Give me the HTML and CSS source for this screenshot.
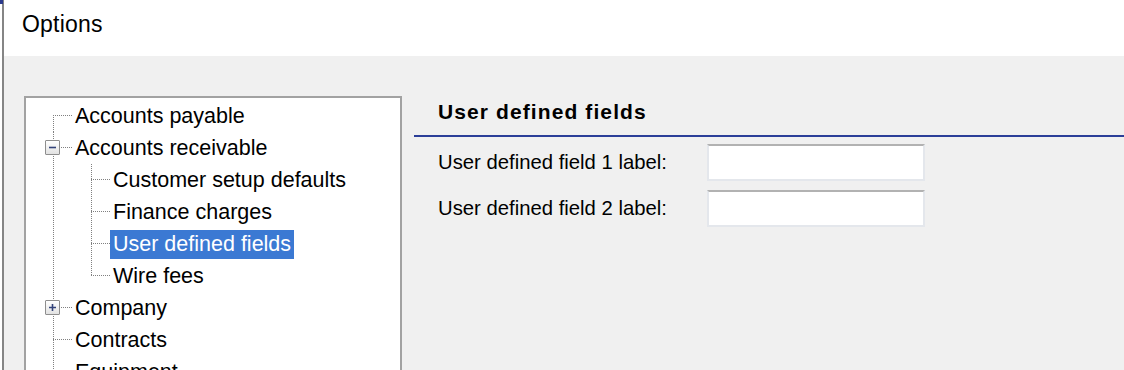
FILE: index.html
```html
<!DOCTYPE html>
<html>
<head>
<meta charset="utf-8">
<link rel="stylesheet" href="styles.css">
</head>
<body>
<div class="corner"></div>
<div class="window">
  <div class="titlebar">Options</div>
  <div class="content">
    <div class="tree">
      <div class="row"><span class="cell first"></span><span class="label">Accounts payable</span></div>
      <div class="row"><span class="cell tee"><span class="box"><svg width="15" height="15" viewBox="0 0 15 15"><path d="M4 7.5h7" stroke="#34447a" stroke-width="1.6"/></svg></span></span><span class="label">Accounts receivable</span></div>
      <div class="row"><span class="cell pipe"></span><span class="cell tee"></span><span class="label">Customer setup defaults</span></div>
      <div class="row"><span class="cell pipe"></span><span class="cell tee"></span><span class="label">Finance charges</span></div>
      <div class="row"><span class="cell pipe"></span><span class="cell tee"></span><span class="label selected">User defined fields</span></div>
      <div class="row"><span class="cell pipe"></span><span class="cell ell"></span><span class="label">Wire fees</span></div>
      <div class="row"><span class="cell tee"><span class="box"><svg width="15" height="15" viewBox="0 0 15 15"><path d="M4 7.5h7M7.5 4v7" stroke="#34447a" stroke-width="1.6"/></svg></span></span><span class="label">Company</span></div>
      <div class="row"><span class="cell tee"></span><span class="label">Contracts</span></div>
      <div class="row"><span class="cell tee"></span><span class="label">Equipment</span></div>
    </div>
    <div class="panel">
      <div class="heading">User defined fields</div>
      <div class="fields">
        <div class="field"><span class="flabel">User defined field 1 label:</span><span class="input"></span></div>
        <div class="field"><span class="flabel">User defined field 2 label:</span><span class="input"></span></div>
      </div>
    </div>
  </div>
</div>
</body>
</html>
```

FILE: styles.css
```css
html, body {
  margin: 0;
  padding: 0;
  height: 370px;
  overflow: hidden;
  background: #ffffff;
  font-family: "Liberation Sans", Arial, sans-serif;
  color: #000;
}

.corner {
  width: 3px;
  height: 4px;
  background: #2c3a8c;
  float: left;
  margin-right: -3px;
}

.window {
  margin-left: 2px;
  border-left: 2px solid #858585;
  height: 370px;
  display: flex;
  flex-direction: column;
}

.titlebar {
  height: 56px;
  flex: none;
  background: #fff;
  padding-left: 18px;
  font-size: 23px;
  letter-spacing: 0.2px;
  line-height: 48px;
}

.content {
  flex: 1;
  background: #f0f0f0;
  display: flex;
  align-items: flex-start;
  min-height: 0;
}

.tree {
  margin-left: 20px;
  margin-top: 40px;
  width: 366px;
  height: 400px;
  flex: none;
  background: #fff;
  border: 2px solid #a2a2a2;
  padding-top: 2px;
  padding-left: 8px;
  box-sizing: content-box;
}

.row {
  height: 32px;
  display: flex;
  align-items: center;
  font-size: 21.5px;
}

.cell {
  width: 38px;
  height: 32px;
  flex: none;
  display: flex;
  align-items: center;
  padding-left: 11px;
  box-sizing: border-box;
  background-repeat: no-repeat;
}

.cell.tee {
  background-image:
    repeating-linear-gradient(to bottom, #808080 0 1px, transparent 1px 2px),
    repeating-linear-gradient(to right, #808080 0 1px, transparent 1px 2px);
  background-size: 1px 32px, 19px 1px;
  background-position: 19px 0, 19px 15px;
}

.cell.first {
  background-image:
    repeating-linear-gradient(to bottom, #808080 0 1px, transparent 1px 2px),
    repeating-linear-gradient(to right, #808080 0 1px, transparent 1px 2px);
  background-size: 1px 17px, 19px 1px;
  background-position: 19px 15px, 19px 15px;
}

.cell.ell {
  background-image:
    repeating-linear-gradient(to bottom, #808080 0 1px, transparent 1px 2px),
    repeating-linear-gradient(to right, #808080 0 1px, transparent 1px 2px);
  background-size: 1px 16px, 19px 1px;
  background-position: 19px 0, 19px 15px;
}

.cell.pipe {
  background-image: repeating-linear-gradient(to bottom, #808080 0 1px, transparent 1px 2px);
  background-size: 1px 32px;
  background-position: 19px 0;
}

.box {
  width: 15px;
  height: 15px;
  box-sizing: border-box;
  border: 1px solid #8e8e8e;
  border-radius: 1px;
  background: linear-gradient(to bottom, #ffffff, #e2e2e2);
  display: flex;
  align-items: center;
  justify-content: center;
  margin-top: -2px;
}

.box svg {
  display: block;
  flex: none;
}

.label {
  padding: 0 3px;
  line-height: 29px;
  white-space: nowrap;
}

.label.selected {
  background: #3b79d3;
  color: #fff;
}

.panel {
  flex: 1;
  margin-left: 12px;
  margin-top: 40px;
}

.heading {
  font-weight: bold;
  font-size: 21px;
  letter-spacing: 1.1px;
  line-height: 32px;
  padding-left: 24px;
  padding-bottom: 7px;
  border-bottom: 2px solid #2b3e98;
}

.fields {
  padding-left: 24px;
  padding-top: 7px;
  display: flex;
  flex-direction: column;
  gap: 9px;
}

.field {
  display: flex;
  align-items: center;
  height: 37px;
}

.flabel {
  width: 269px;
  flex: none;
  font-size: 20.3px;
}

.input {
  width: 218px;
  height: 37px;
  box-sizing: border-box;
  background: #fff;
  border: 2px solid #e4e7ec;
  border-top-color: #b2b2b2;
}
```
